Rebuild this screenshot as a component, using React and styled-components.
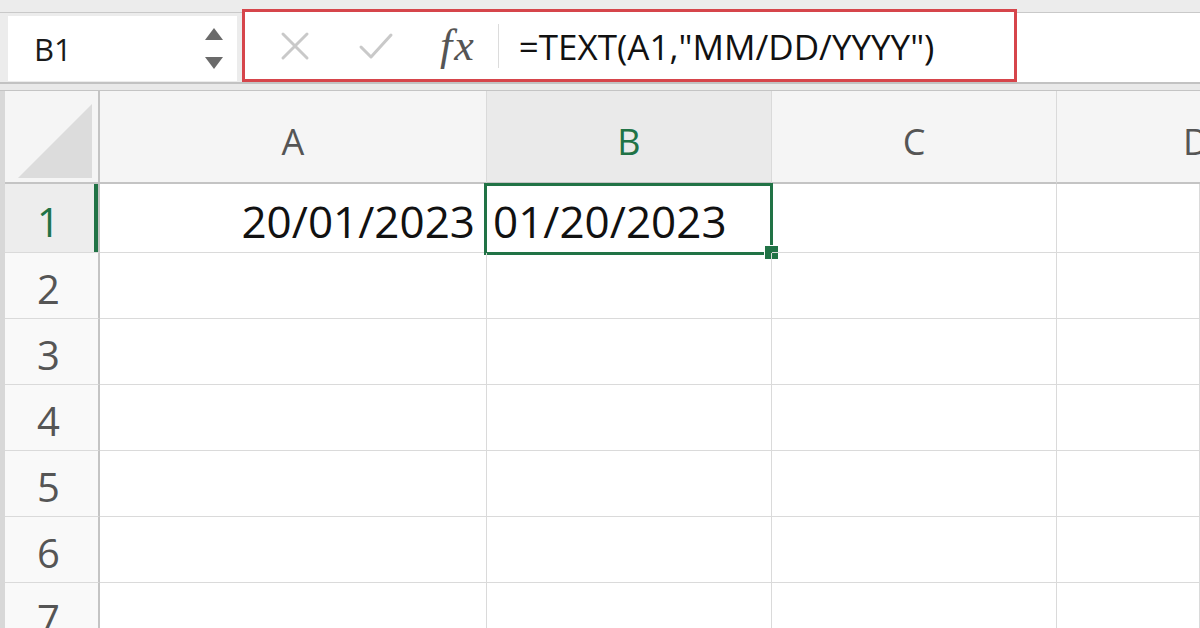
import React from "react";
import styled, { createGlobalStyle } from "styled-components";

const GlobalStyle = createGlobalStyle`
  html, body {
    margin: 0;
    padding: 0;
    background: #ececec;
  }
  body {
    font-family: "Open Sans", "Liberation Sans", Arial, sans-serif;
  }
`;

const GREEN = "#217346";

const Window = styled.div`
  width: 1200px;
  height: 628px;
  overflow: hidden;
  background: #ececec;
  display: flex;
  flex-direction: column;
`;

const Toolbar = styled.div`
  flex-shrink: 0;
  padding-top: 12px;
  background: #ececec;
`;

const ToolRow = styled.div`
  display: flex;
  height: 69px;
  border-top: 1px solid #c9c9c9;
`;

const NameBox = styled.div`
  width: 229px;
  margin: 3px 5px 1px 8px;
  background: #ffffff;
  display: flex;
  align-items: center;
  justify-content: space-between;
  padding: 0 14px 0 26px;
  box-sizing: border-box;
  font-size: 31px;
  color: #1a1a1a;
`;

const Spinner = styled.div`
  display: flex;
  flex-direction: column;
  gap: 17px;
  color: #6a6a6a;
`;

const FormulaArea = styled.div`
  flex: 1;
  display: flex;
  background: #ffffff;
`;

const Highlight = styled.div`
  width: 775px;
  margin-top: -4px;
  border: 3px solid #d6454b;
  box-sizing: border-box;
  display: flex;
  align-items: center;
  background: #ffffff;
`;

const IconSlot = styled.div`
  width: ${(p) => p.$w}px;
  display: flex;
  justify-content: center;
  align-items: center;
`;

const Fx = styled.span`
  font-family: "Liberation Serif", "Times New Roman", serif;
  font-style: italic;
  font-size: 44px;
  color: #555;
  letter-spacing: 2px;
  padding: 0 22px 0 33px;
  border-right: 1px solid #dcdcdc;
  line-height: 44px;
`;

const Formula = styled.span`
  font-size: 35px;
  color: #111;
  padding-left: 20px;
  padding-top: 2px;
`;

const Divider = styled.div`
  flex-shrink: 0;
  height: 9px;
  box-sizing: border-box;
  border-top: 2px solid #c2c2c2;
  border-bottom: 1px solid #c4c4c4;
  background: #e9e9e9;
`;

const Sheet = styled.div`
  flex-shrink: 0;
  display: grid;
  grid-template-columns: 95px 387px 285px 285px 1fr;
  grid-template-rows: 93px 69px repeat(6, 66px);
  border-left: 5px solid #d8d8d8;
  background: #ffffff;
`;

const Corner = styled.div`
  background: #f5f5f5;
  border-right: 2px solid #c4c4c4;
  border-bottom: 2px solid #c4c4c4;
  display: flex;
  align-items: flex-end;
  justify-content: flex-end;
  padding: 0 6px 4px 0;
`;

const ColHead = styled.div`
  background: ${(p) => (p.$active ? "#eaeaea" : "#f5f5f5")};
  color: ${(p) => (p.$active ? GREEN : "#555")};
  border-right: 1px solid #dadada;
  border-bottom: 2px solid #c4c4c4;
  display: flex;
  align-items: center;
  justify-content: ${(p) => (p.$edge ? "flex-end" : "center")};
  font-size: 36px;
  padding-top: 10px;
  margin-right: ${(p) => (p.$edge ? "-10px" : "0")};
  box-sizing: border-box;
`;

const RowHead = styled.div`
  background: ${(p) => (p.$active ? "#ededed" : "#f9f9f9")};
  color: ${(p) => (p.$active ? GREEN : "#555")};
  border-right: 2px solid #c4c4c4;
  border-bottom: 1px solid #dadada;
  display: flex;
  align-items: center;
  justify-content: center;
  font-size: 40px;
  padding: 6px 6px 0 0;
  box-sizing: border-box;
  box-shadow: ${(p) => (p.$active ? `inset -4px 0 0 ${GREEN}` : "none")};
`;

const Cell = styled.div`
  position: relative;
  border-right: 1px solid #dadada;
  border-bottom: 1px solid #dadada;
  display: flex;
  align-items: center;
  justify-content: ${(p) => (p.$right ? "flex-end" : "flex-start")};
  padding: 6px 11px 0 6px;
  font-size: 44px;
  color: #111;
  white-space: nowrap;
  box-sizing: border-box;
`;

const Selection = styled.div`
  position: absolute;
  inset: -1px -2px -3px -3px;
  border: 3px solid ${GREEN};
  pointer-events: none;
`;

const FillHandle = styled.div`
  position: absolute;
  right: -9px;
  bottom: -8px;
  width: 13px;
  height: 13px;
  background: ${GREEN};
  border: 1px solid #fff;
`;

const columns = ["A", "B", "C", "D"];
const rows = [1, 2, 3, 4, 5, 6, 7];

const CrossIcon = () => (
  <svg width="30" height="30" viewBox="0 0 30 30">
    <path d="M3 3 L27 27 M27 3 L3 27" stroke="#c9c9c9" strokeWidth="3" strokeLinecap="round" />
  </svg>
);

const CheckIcon = () => (
  <svg width="36" height="28" viewBox="0 0 36 28">
    <path d="M3 15 L13 25 L33 3" stroke="#c9c9c9" strokeWidth="3" fill="none" strokeLinecap="round" strokeLinejoin="round" />
  </svg>
);

const Arrow = ({ up }) => (
  <svg width="18" height="12" viewBox="0 0 18 12">
    <path d={up ? "M9 0 L18 12 L0 12 Z" : "M0 0 L18 0 L9 12 Z"} fill="currentColor" />
  </svg>
);

const CornerMark = () => (
  <svg width="74" height="74" viewBox="0 0 74 74">
    <path d="M74 0 L74 74 L0 74 Z" fill="#dcdcdc" />
  </svg>
);

export default function App() {
  return (
    <Window>
      <GlobalStyle />
      <Toolbar>
        <ToolRow>
          <NameBox>
            <span>B1</span>
            <Spinner>
              <Arrow up />
              <Arrow />
            </Spinner>
          </NameBox>
          <FormulaArea>
            <Highlight>
              <IconSlot $w={100}>
                <CrossIcon />
              </IconSlot>
              <IconSlot $w={62}>
                <CheckIcon />
              </IconSlot>
              <Fx>fx</Fx>
              <Formula>=TEXT(A1,"MM/DD/YYYY")</Formula>
            </Highlight>
          </FormulaArea>
        </ToolRow>
      </Toolbar>
      <Divider />
      <Sheet>
        <Corner>
          <CornerMark />
        </Corner>
        {columns.map((c, i) => (
          <ColHead key={c} $active={c === "B"} $edge={i === columns.length - 1}>
            {c}
          </ColHead>
        ))}
        {rows.map((r) => (
          <React.Fragment key={r}>
            <RowHead $active={r === 1}>{r}</RowHead>
            {columns.map((c) => (
              <Cell key={c} $right={c === "A"}>
                {r === 1 && c === "A" && "20/01/2023"}
                {r === 1 && c === "B" && (
                  <>
                    01/20/2023
                    <Selection>
                      <FillHandle />
                    </Selection>
                  </>
                )}
              </Cell>
            ))}
          </React.Fragment>
        ))}
      </Sheet>
    </Window>
  );
}
